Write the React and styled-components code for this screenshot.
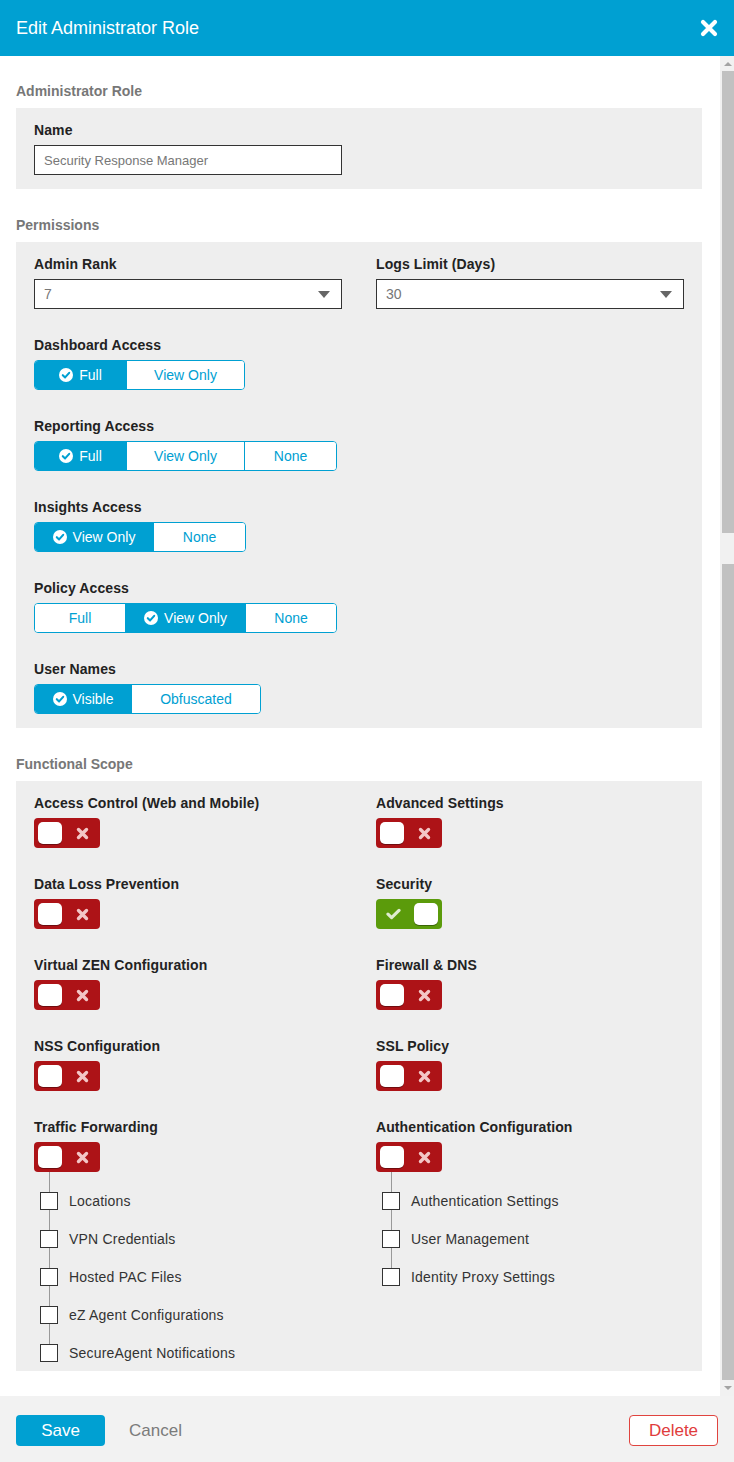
import React from "react";
import styled, { createGlobalStyle } from "styled-components";

const BLUE = "#00a0d2";
const RED = "#ad1317";
const GREEN = "#5b9b0b";

const GlobalStyle = createGlobalStyle`
  html, body { margin: 0; padding: 0; background: #fff; }
  body { font-family: "Liberation Sans", Arial, sans-serif; }
  * { box-sizing: border-box; }
`;

const dashboardOpts = [
  { label: "Full", width: 91, on: true },
  { label: "View Only", width: 118 },
];
const reportingOpts = [
  { label: "Full", width: 91, on: true },
  { label: "View Only", width: 118 },
  { label: "None", width: 92 },
];
const insightsOpts = [
  { label: "View Only", width: 118, on: true },
  { label: "None", width: 92 },
];
const policyOpts = [
  { label: "Full", width: 90 },
  { label: "View Only", width: 120, on: true },
  { label: "None", width: 91 },
];
const userNameOpts = [
  { label: "Visible", width: 96, on: true },
  { label: "Obfuscated", width: 129 },
];

const scopes = [
  { left: { label: "Access Control (Web and Mobile)" }, right: { label: "Advanced Settings" } },
  { left: { label: "Data Loss Prevention" }, right: { label: "Security", on: true } },
  { left: { label: "Virtual ZEN Configuration" }, right: { label: "Firewall & DNS" } },
  { left: { label: "NSS Configuration" }, right: { label: "SSL Policy" } },
  {
    left: {
      label: "Traffic Forwarding",
      children: ["Locations", "VPN Credentials", "Hosted PAC Files", "eZ Agent Configurations", "SecureAgent Notifications"],
    },
    right: {
      label: "Authentication Configuration",
      children: ["Authentication Settings", "User Management", "Identity Proxy Settings"],
    },
  },
];

function CheckCircle() {
  return (
    <svg width="14" height="14" viewBox="0 0 14 14">
      <circle cx="7" cy="7" r="7" fill="#fff" />
      <polyline points="3.8,7.2 6.1,9.4 10.2,4.9" fill="none" stroke={BLUE} strokeWidth="2.1" strokeLinecap="round" strokeLinejoin="round" />
    </svg>
  );
}

function Segments({ options }) {
  return (
    <SegmentGroup>
      {options.map((o) => (
        <Segment key={o.label} $on={o.on} $w={o.width}>
          {o.on && <CheckCircle />}
          {o.label}
        </Segment>
      ))}
    </SegmentGroup>
  );
}

function Toggle({ on }) {
  return (
    <ToggleBox $on={on}>
      <Knob />
      <ToggleIcon $on={on}>
        {on ? (
          <svg width="15" height="12" viewBox="0 0 15 12">
            <polyline points="2,6.2 5.6,9.6 13,2.4" fill="none" stroke="#dfeccf" strokeWidth="3.2" strokeLinecap="round" strokeLinejoin="round" />
          </svg>
        ) : (
          <svg width="13" height="13" viewBox="0 0 13 13">
            <path d="M2.5 2.5 L10.5 10.5 M10.5 2.5 L2.5 10.5" stroke="#f3c6c6" strokeWidth="3.4" strokeLinecap="round" />
          </svg>
        )}
      </ToggleIcon>
    </ToggleBox>
  );
}

function ScopeItem({ item }) {
  return (
    <div>
      <Label>{item.label}</Label>
      <Toggle on={item.on} />
      {item.children && (
        <Tree>
          {item.children.map((c) => (
            <TreeItem key={c}>
              <Checkbox />
              <TreeLabel>{c}</TreeLabel>
            </TreeItem>
          ))}
        </Tree>
      )}
    </div>
  );
}

function Dropdown({ value }) {
  return (
    <SelectBox>
      <SelectValue>{value}</SelectValue>
      <Caret />
    </SelectBox>
  );
}

export default function App() {
  return (
    <>
      <GlobalStyle />
      <Modal>
        <Header>
          <Title>Edit Administrator Role</Title>
          <CloseButton type="button" aria-label="Close">
            <svg width="18" height="18" viewBox="0 0 18 18">
              <path d="M3 3 L15 15 M15 3 L3 15" stroke="#fff" strokeWidth="4.2" strokeLinecap="round" />
            </svg>
          </CloseButton>
        </Header>

        <Body>
          <Content>
            <Section>
              <SectionTitle>Administrator Role</SectionTitle>
              <Panel>
                <Label>Name</Label>
                <TextInput defaultValue="Security Response Manager" readOnly />
              </Panel>
            </Section>

            <Section>
              <SectionTitle>Permissions</SectionTitle>
              <Panel>
                <FieldStack>
                  <TwoCol>
                    <div>
                      <Label>Admin Rank</Label>
                      <Dropdown value="7" />
                    </div>
                    <div>
                      <Label>Logs Limit (Days)</Label>
                      <Dropdown value="30" />
                    </div>
                  </TwoCol>
                  <div>
                    <Label>Dashboard Access</Label>
                    <Segments options={dashboardOpts} />
                  </div>
                  <div>
                    <Label>Reporting Access</Label>
                    <Segments options={reportingOpts} />
                  </div>
                  <div>
                    <Label>Insights Access</Label>
                    <Segments options={insightsOpts} />
                  </div>
                  <div>
                    <Label>Policy Access</Label>
                    <Segments options={policyOpts} />
                  </div>
                  <div>
                    <Label>User Names</Label>
                    <Segments options={userNameOpts} />
                  </div>
                </FieldStack>
              </Panel>
            </Section>

            <Section>
              <SectionTitle>Functional Scope</SectionTitle>
              <Panel $pb={9}>
                <ScopeGrid>
                  {scopes.map((row) => (
                    <React.Fragment key={row.left.label}>
                      <ScopeItem item={row.left} />
                      <ScopeItem item={row.right} />
                    </React.Fragment>
                  ))}
                </ScopeGrid>
              </Panel>
            </Section>
          </Content>

          <ScrollTrack>
            <ScrollArrow $up />
            <Thumb $h={462} />
            <ThumbGap />
            <Thumb />
            <ScrollArrow />
          </ScrollTrack>
        </Body>

        <Footer>
          <SaveButton type="button">Save</SaveButton>
          <CancelButton type="button">Cancel</CancelButton>
          <DeleteButton type="button">Delete</DeleteButton>
        </Footer>
      </Modal>
    </>
  );
}

const Modal = styled.div`
  width: 734px;
  height: 1462px;
  display: flex;
  flex-direction: column;
  background: #fff;
`;

const Header = styled.header`
  height: 56px;
  flex-shrink: 0;
  background: ${BLUE};
  display: flex;
  align-items: center;
  justify-content: space-between;
  padding: 0 16px;
`;

const Title = styled.h1`
  margin: 0;
  color: #fff;
  font-size: 18px;
  font-weight: normal;
`;

const CloseButton = styled.button`
  border: 0;
  background: none;
  padding: 0;
  width: 18px;
  height: 18px;
  display: flex;
  cursor: pointer;
`;

const Body = styled.div`
  flex: 1;
  display: flex;
  min-height: 0;
`;

const Content = styled.main`
  flex: 1;
  padding: 27px 18px 0 16px;
`;

const Section = styled.section`
  & + & {
    margin-top: 28px;
  }
`;

const SectionTitle = styled.h2`
  margin: 0 0 9px;
  font-size: 14px;
  line-height: 16px;
  font-weight: bold;
  color: #777;
`;

const Panel = styled.div`
  background: #eeeeee;
  padding: 14px 18px ${(p) => p.$pb ?? 14}px;
`;

const Label = styled.div`
  font-size: 14px;
  line-height: 16px;
  font-weight: bold;
  letter-spacing: 0.1px;
  color: #222;
  margin-bottom: 7px;
`;

const TextInput = styled.input`
  display: block;
  width: 308px;
  height: 30px;
  border: 1px solid #333;
  background: #fff;
  padding: 0 9px;
  font-family: "Liberation Sans", Arial, sans-serif;
  font-size: 13px;
  color: #777;
  outline: none;
`;

const FieldStack = styled.div`
  display: flex;
  flex-direction: column;
  gap: 28px;
`;

const TwoCol = styled.div`
  display: grid;
  grid-template-columns: 308px 308px;
  column-gap: 34px;
`;

const SelectBox = styled.div`
  width: 308px;
  height: 30px;
  border: 1px solid #333;
  background: #fff;
  display: flex;
  align-items: center;
  justify-content: space-between;
  padding: 0 11px 0 9px;
`;

const SelectValue = styled.span`
  font-size: 14px;
  color: #777;
`;

const Caret = styled.span`
  width: 0;
  height: 0;
  border-left: 6px solid transparent;
  border-right: 6px solid transparent;
  border-top: 7px solid #666;
`;

const SegmentGroup = styled.div`
  display: inline-flex;
  height: 30px;
  border: 1px solid ${BLUE};
  border-radius: 4px;
  overflow: hidden;
  background: #fff;
`;

const Segment = styled.div`
  width: ${(p) => p.$w}px;
  display: flex;
  align-items: center;
  justify-content: center;
  gap: 6px;
  font-size: 14px;
  color: ${(p) => (p.$on ? "#fff" : BLUE)};
  background: ${(p) => (p.$on ? BLUE : "#fff")};

  & + & {
    border-left: 1px solid ${BLUE};
  }
`;

const ScopeGrid = styled.div`
  display: grid;
  grid-template-columns: 308px 308px;
  column-gap: 34px;
  row-gap: 28px;
`;

const ToggleBox = styled.div`
  width: 66px;
  height: 30px;
  border-radius: 4px;
  background: ${(p) => (p.$on ? GREEN : RED)};
  display: flex;
  flex-direction: ${(p) => (p.$on ? "row-reverse" : "row")};
  align-items: center;
  padding: 0 4px;
`;

const Knob = styled.div`
  width: 24px;
  height: 22px;
  border-radius: 5px;
  background: #fff;
  box-shadow: 0 1px 0 rgba(0, 0, 0, 0.35);
`;

const ToggleIcon = styled.div`
  display: flex;
  margin: ${(p) => (p.$on ? "0 13px 0 0" : "0 0 0 14px")};
`;

const Tree = styled.div`
  position: relative;
  margin-left: 6px;
  padding-top: 20px;
  display: flex;
  flex-direction: column;
  gap: 20px;

  &::before {
    content: "";
    position: absolute;
    left: 9px;
    top: 0;
    bottom: 9px;
    width: 1px;
    background: #999;
  }
`;

const TreeItem = styled.div`
  display: flex;
  align-items: center;
  gap: 11px;
`;

const Checkbox = styled.span`
  position: relative;
  width: 18px;
  height: 18px;
  border: 1px solid #333;
  background: #fff;
  flex-shrink: 0;
`;

const TreeLabel = styled.span`
  font-size: 14px;
  line-height: 18px;
  letter-spacing: 0.2px;
  color: #333;
`;

const ScrollTrack = styled.div`
  width: 15px;
  flex-shrink: 0;
  background: #f1f1f1;
  display: flex;
  flex-direction: column;
  align-items: flex-end;
`;

const ScrollArrow = styled.div`
  width: 15px;
  height: ${(p) => (p.$up ? 15 : 16)}px;
  display: flex;
  align-items: center;
  justify-content: center;

  &::after {
    content: "";
    border-left: 4px solid transparent;
    border-right: 4px solid transparent;
    ${(p) => (p.$up ? "border-bottom" : "border-top")}: 4px solid #a3a3a3;
  }
`;

const Thumb = styled.div`
  width: 13px;
  background: #c1c1c1;
  ${(p) => (p.$h ? `height: ${p.$h}px;` : "flex: 1;")}
`;

const ThumbGap = styled.div`
  height: 31px;
`;

const Footer = styled.footer`
  height: 66px;
  flex-shrink: 0;
  background: #f2f2f2;
  display: flex;
  align-items: center;
  padding: 3px 16px 0;
`;

const BaseButton = styled.button`
  font-family: "Liberation Sans", Arial, sans-serif;
  font-size: 17px;
  height: 31px;
  border-radius: 4px;
  cursor: pointer;
  padding: 0;
`;

const SaveButton = styled(BaseButton)`
  width: 89px;
  border: 0;
  background: ${BLUE};
  color: #fff;
`;

const CancelButton = styled(BaseButton)`
  margin-left: 24px;
  border: 0;
  background: none;
  color: #7b7b7b;
`;

const DeleteButton = styled(BaseButton)`
  margin-left: auto;
  width: 89px;
  border: 1px solid #e0443f;
  background: #fff;
  color: #e03c3c;
`;
